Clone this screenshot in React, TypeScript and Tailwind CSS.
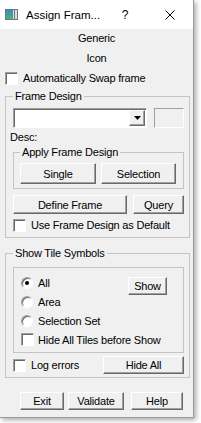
import React from "react";

const raised =
  "border border-solid border-t-white border-l-white border-r-[#696969] border-b-[#696969] shadow-[inset_-1px_-1px_0_#a0a0a0] bg-[#f0f0f0]";
const sunken =
  "border border-solid border-t-[#a0a0a0] border-l-[#a0a0a0] border-r-white border-b-white shadow-[inset_1px_1px_0_#696969]";

function Btn({ label, className = "" }: { label: string; className?: string }) {
  return (
    <div className={`${raised} flex items-center justify-center shrink-0 ${className}`}>
      <span>{label}</span>
    </div>
  );
}

function Check({ label, gap = "ml-[5px]" }: { label: string; gap?: string }) {
  return (
    <div className="flex items-center">
      <div className={`${sunken} w-[13px] h-[13px] bg-white shrink-0`} />
      <span className={gap}>{label}</span>
    </div>
  );
}

function Radio({ label, checked = false }: { label: string; checked?: boolean }) {
  return (
    <div className="flex items-center h-[19px]">
      <div className="relative w-[12px] h-[12px] rounded-full bg-white border border-solid border-t-[#a0a0a0] border-l-[#a0a0a0] border-r-white border-b-white shadow-[inset_1px_1px_0_#696969] shrink-0 flex items-center justify-center">
        {checked && <div className="w-[4px] h-[4px] rounded-full bg-black" />}
      </div>
      <span className="ml-[5px]">{label}</span>
    </div>
  );
}

function TitleIcon() {
  return (
    <svg width="13" height="11" viewBox="0 0 13 11" className="shrink-0">
      <defs>
        <linearGradient id="ti" x1="0" y1="0" x2="0" y2="1">
          <stop offset="0" stopColor="#3a8fb8" />
          <stop offset="1" stopColor="#4fae7a" />
        </linearGradient>
      </defs>
      <rect x="0.5" y="0.5" width="12" height="10" fill="#d8dde2" stroke="#6b7785" />
      <rect x="1" y="1" width="7" height="9" fill="url(#ti)" />
      <rect x="9" y="1" width="1" height="9" fill="#6b7785" />
    </svg>
  );
}

export default function App() {
  return (
    <div className="w-[201px] h-[423px] bg-white overflow-hidden">
      <div className="w-[194px] h-[418px] bg-[#f0f0f0] border-r border-b border-[#9b9b9b] shadow-[2px_2px_5px_rgba(0,0,0,0.35)] flex flex-col text-[11px] leading-[14px] tracking-[-0.2px] text-black font-['Liberation_Sans',Arial,sans-serif]">
        {/* title bar */}
        <div className="h-[29px] bg-white flex items-center shrink-0">
          <div className="ml-[5px]">
            <TitleIcon />
          </div>
          <span className="ml-[8px] w-[92px] text-[11.5px] tracking-[0px]">Assign Fram...</span>
          <span className="w-[14px] text-center text-[12px]">?</span>
          <svg width="10" height="10" viewBox="0 0 10 10" className="ml-[33px]">
            <path d="M0.5 0.5 L9.5 9.5 M9.5 0.5 L0.5 9.5" stroke="#000" strokeWidth="1" />
          </svg>
        </div>

        <div className="text-center mt-[2px]">Generic</div>
        <div className="text-center mt-[6px]">Icon</div>
        <div className="mt-[6px] pl-[5px]">
          <Check label="Automatically Swap frame" />
        </div>

        {/* Frame Design */}
        <fieldset className="mt-[4px] ml-[5px] w-[185px] border border-solid border-[#c4c4c4] min-w-0">
          <legend className="ml-[7px] px-[2px]">Frame Design</legend>
          <div className="pl-[7px] pb-[5px]">
            <div className="mt-[5px] flex">
              <div className={`${sunken} w-[134px] h-[20px] bg-white flex justify-end items-stretch p-[1px]`}>
                <div className={`${raised} w-[16px] flex items-center justify-center`}>
                  <svg width="7" height="4" viewBox="0 0 7 4">
                    <path d="M0 0 H7 L3.5 4 Z" fill="#000" />
                  </svg>
                </div>
              </div>
              <div className="ml-[7px] w-[30px] h-[20px] border border-solid border-t-[#a0a0a0] border-l-[#a0a0a0] border-r-white border-b-white bg-[#f0f0f0]" />
            </div>
            <div className="mt-[2px] -ml-[3px]">Desc:</div>
            <fieldset className="mt-[1px] w-[171px] border border-solid border-[#c4c4c4] min-w-0">
              <legend className="ml-[6px] px-[2px]">Apply Frame Design</legend>
              <div className="flex pl-[6px] pt-[4px] pb-[4px] gap-[5px]">
                <Btn label="Single" className="w-[76px] h-[21px]" />
                <Btn label="Selection" className="w-[75px] h-[21px]" />
              </div>
            </fieldset>
            <div className="mt-[6px] flex">
              <Btn label="Define Frame" className="w-[114px] h-[19px]" />
              <Btn label="Query" className="ml-[6px] w-[51px] h-[19px]" />
            </div>
            <div className="mt-[4px] h-[14px] flex items-center">
              <Check label="Use Frame Design as Default" />
            </div>
          </div>
        </fieldset>

        {/* Show Tile Symbols */}
        <fieldset className="mt-[8px] ml-[5px] w-[185px] border border-solid border-[#c4c4c4] min-w-0">
          <legend className="ml-[7px] px-[2px]">Show Tile Symbols</legend>
          <div className="pl-[7px] pb-[3px]">
            <fieldset className="mt-[7px] w-[171px] border border-solid border-[#c4c4c4] min-w-0">
              <div className="pl-[7px] pt-[5px] pb-[3px]">
                <div className="flex">
                  <div className="w-[107px] flex flex-col">
                    <Radio label="All" checked />
                    <Radio label="Area" />
                    <Radio label="Selection Set" />
                  </div>
                  <Btn label="Show" className="mt-[4px] w-[39px] h-[18px]" />
                </div>
                <div className="h-[19px] flex items-center">
                  <Check label="Hide All Tiles before Show" gap="ml-[4px]" />
                </div>
              </div>
            </fieldset>
            <div className="mt-[3px] h-[18px] w-[171px] flex items-center justify-between">
              <Check label="Log errors" />
              <Btn label="Hide All" className="w-[81px] h-[18px]" />
            </div>
          </div>
        </fieldset>

        {/* bottom buttons */}
        <div className="mt-[14px] pl-[20px] flex">
          <Btn label="Exit" className="w-[44px] h-[18px]" />
          <Btn label="Validate" className="ml-[4px] w-[56px] h-[18px]" />
          <Btn label="Help" className="ml-[7px] w-[52px] h-[18px]" />
        </div>
      </div>
    </div>
  );
}
